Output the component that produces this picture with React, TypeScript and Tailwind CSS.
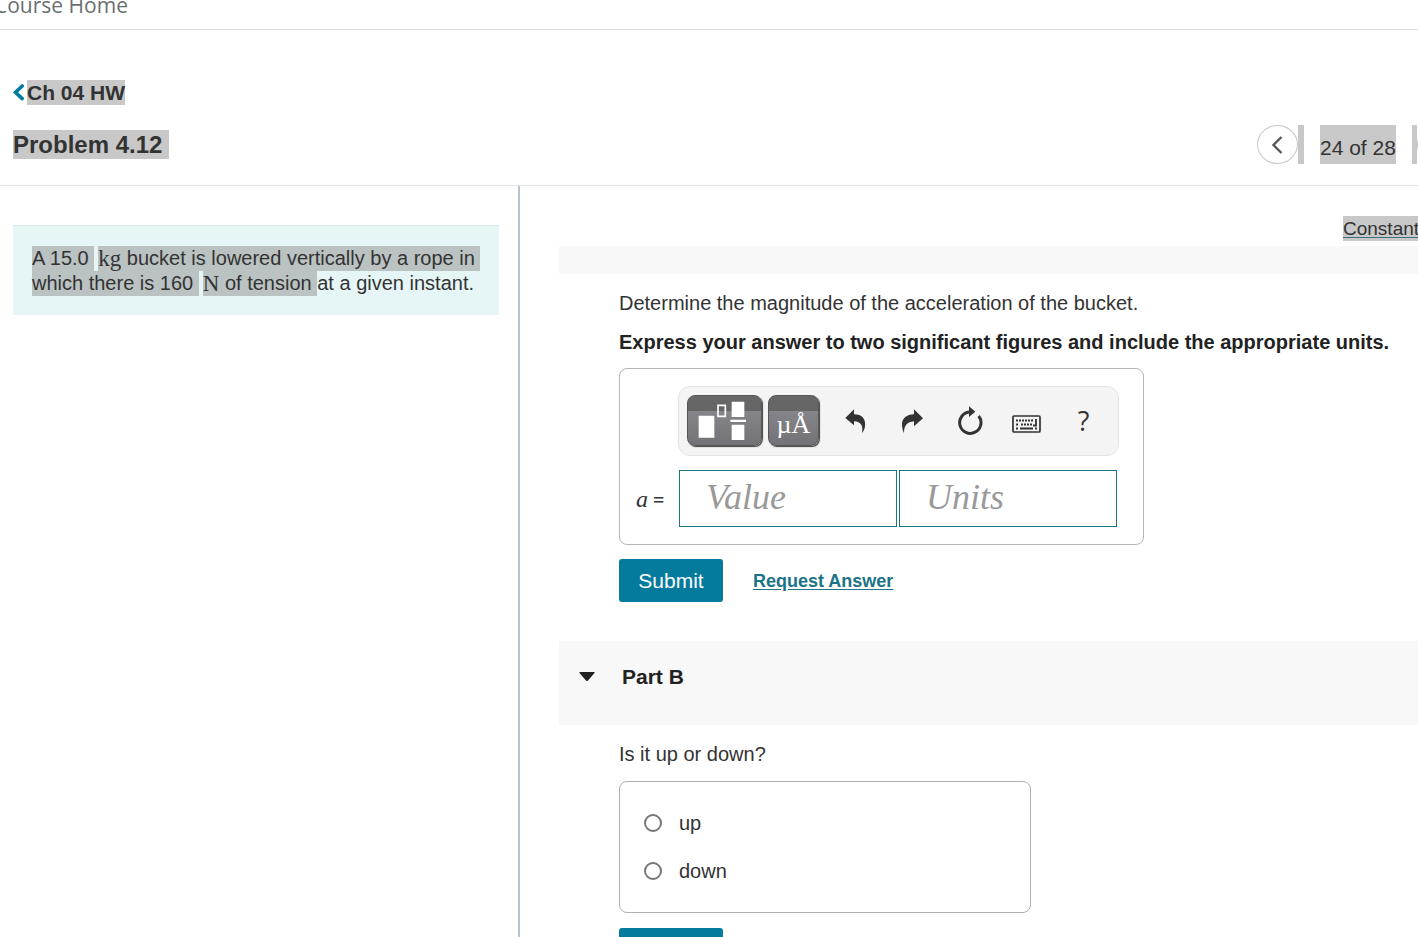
import type { ReactNode } from "react";

function Mark({ children }: { children: ReactNode }) {
  return <span className="inline-block h-[25px] whitespace-pre bg-[#bac2c2] align-top">{children}</span>;
}

function Unit({ children }: { children: ReactNode }) {
  return (
    <span className="ml-1 inline-block h-[25px] bg-[#bac2c2] align-top font-['Liberation_Serif',serif] text-[23px]">
      {children}
    </span>
  );
}

function TopBar() {
  return (
    <div className="h-[30px] overflow-hidden border-b border-[#dcdcdc]">
      <a
        href="#"
        className="-ml-[6px] -mt-[9px] block font-['Open_Sans',sans-serif] text-[21px] leading-7 text-[#6a7070]"
      >
        Course Home
      </a>
    </div>
  );
}

function ProblemHeader() {
  return (
    <header className="overflow-hidden border-b border-[#e1e1e1] pb-[21px] pl-[13px] pt-[50px] text-[21px] text-[#333]">
      <a href="#" className="flex w-fit items-center font-bold leading-[25px]">
        <svg width="14" height="20" viewBox="0 0 14 20" fill="none" stroke="#047a9c" strokeWidth="3.6" aria-hidden="true">
          <path d="M9.200 3 2.500 9.300l6.700 6.300" strokeLinecap="round" />
        </svg>
        <span className="bg-[#c8c8c8]">Ch 04 HW</span>
      </a>
      <div className="mt-5 flex items-center justify-between">
        <h1 className="whitespace-pre bg-[#c8c8c8] text-2xl font-bold leading-[29px]">{"Problem 4.12 "}</h1>
        <nav className="flex w-[161px] shrink-0" aria-label="Problems">
          <button
            type="button"
            aria-label="Previous problem"
            className="grid h-[39px] w-[41px] shrink-0 place-items-center rounded-[50%] border border-[#c7c7c7]"
          >
            <svg width="12" height="20" viewBox="0 0 12 20" fill="none" stroke="#555" strokeWidth="2.3" aria-hidden="true">
              <path d="M9.500 2 1.500 10l8 8" />
            </svg>
          </button>
          <span className="w-[6px] shrink-0 bg-[#c8c8c8]" />
          <span className="mx-4 shrink-0 whitespace-nowrap bg-[#c8c8c8] pt-[7px] leading-8">24 of 28</span>
          <span className="w-[5px] shrink-0 bg-[#c8c8c8]" />
          <button
            type="button"
            aria-label="Next problem"
            className="h-[39px] w-[41px] shrink-0 rounded-[50%] border border-[#c7c7c7]"
          />
        </nav>
      </div>
    </header>
  );
}

function Toolbar() {
  const dark =
    "grid h-[51px] place-items-center rounded-lg border border-[#555] bg-linear-to-b from-[#666] from-30% via-[#85858a] via-30% to-[#737377] shadow-[1px_1px_1px_#444]";
  const plain = "grid h-[51px] w-[57px] shrink-0 place-items-center text-[#333]";
  return (
    <div className="flex w-[441px] items-center rounded-xl border border-[#e4e4e4] bg-[#f4f4f4] pb-[9px] pl-2 pt-2">
      <button type="button" aria-label="Templates" className={`${dark} w-[75px] pr-[5px]`}>
        <svg width="48" height="40" viewBox="0 0 144 120" fill="#fff" aria-hidden="true">
          <path d="M2 44h47v66H2zM101 2h38v46h-38zM101 71h38v46h-38zM97 56h47v7H97z" />
          <path d="M60 13h22v33H60z" fill="none" stroke="#fff" strokeWidth="5" />
        </svg>
      </button>
      <button
        type="button"
        aria-label="Symbols"
        className={`${dark} ml-[6px] mr-2 w-[51px] pt-2 font-['Liberation_Serif',serif] text-[26px] leading-8 text-white`}
      >
        µÅ
      </button>
      <button type="button" aria-label="Undo" className={plain}>
        <svg width="21" height="26" viewBox="525 82 63 78" fill="currentColor" aria-hidden="true">
          <path d="M526 112 552 86v15c24 0 36 14 33 36-1 9-4 15-9 20 4-22-3-34-24-35v12z" />
        </svg>
      </button>
      <button type="button" aria-label="Redo" className={plain}>
        <svg width="21" height="26" viewBox="38 82 63 78" fill="currentColor" aria-hidden="true">
          <path d="M101 113 74 86v15c-28 1-40 18-35 40 1 7 3 12 5 16 0-22 9-33 30-35v15z" />
        </svg>
      </button>
      <button type="button" aria-label="Reset" className={plain}>
        <svg width="26" height="29" viewBox="203 80 78 87" fill="none" stroke="currentColor" aria-hidden="true">
          <path d="M242 98a32 32 0 1 0 26 12" strokeWidth="9" />
          <path d="m239 81 19 16-19 16z" fill="currentColor" stroke="none" />
        </svg>
      </button>
      <button type="button" aria-label="Keyboard shortcuts" className={`${plain} pt-2`}>
        <svg width="29" height="19" viewBox="0 0 29 19" fill="none" stroke="currentColor" aria-hidden="true">
          <rect x="1" y="1" width="27" height="16" rx="1" strokeWidth="1.700" />
          <path d="M4 5.500h17M4 9.500h3M9 9.500h12M4 13.500h2M23 13.500h2" strokeWidth="1.800" strokeDasharray="2 1" />
          <path d="M8 13.500h13M24 4v6.500h-3" strokeWidth="1.800" />
        </svg>
      </button>
      <button type="button" aria-label="Help" className={`${plain} font-['Open_Sans',sans-serif] text-[27px] font-medium leading-8`}>
        ?
      </button>
    </div>
  );
}

function AnswerField({ name }: { name: string }) {
  return (
    <input
      type="text"
      aria-label={name}
      placeholder={name}
      className="h-[57px] w-[218px] border border-[#1b7386] bg-white px-[26px] pb-1 font-['Liberation_Serif',serif] text-4xl italic text-[#333] placeholder:text-[#999]"
    />
  );
}

function PartA() {
  return (
    <section className="pl-[60px] pt-[17px]">
      <p className="leading-[25px]">Determine the magnitude of the acceleration of the bucket.</p>
      <p className="mt-[14px] whitespace-nowrap font-bold leading-[25px] text-[#222]">
        Express your answer to two significant figures and include the appropriate units.
      </p>
      <div className="mt-[13px] w-[525px] rounded-lg border border-[#b5b5b5] pb-[17px] pl-4 pt-[17px]">
        <div className="pl-[42px]">
          <Toolbar />
        </div>
        <div className="mt-[14px] flex items-center">
          <span className="w-[43px] whitespace-nowrap font-['Liberation_Serif',serif] text-[20px]">
            <i className="text-2xl">a</i> <b>=</b>
          </span>
          <div className="flex gap-[2px]">
            <AnswerField name="Value" />
            <AnswerField name="Units" />
          </div>
        </div>
      </div>
      <div className="mt-[14px] flex items-center gap-[30px]">
        <SubmitButton />
        <a href="#" className="text-lg font-bold text-[#1b7386] underline underline-offset-2">
          Request Answer
        </a>
      </div>
    </section>
  );
}

function SubmitButton() {
  return (
    <button type="button" className="h-[43px] w-[104px] rounded-[3px] bg-[#047a9c] text-[21px] text-white">
      Submit
    </button>
  );
}

function PartB() {
  return (
    <section className="mt-[39px]">
      <h2 className="h-[84px] bg-[#f8f8f8] pl-5 pt-[23px] text-[21px] font-bold leading-[25px] text-[#222]">
        <button type="button" className="flex items-center gap-[27px]">
          <svg width="16" height="10" viewBox="0 0 16 10" fill="#222" aria-hidden="true">
            <path d="M1 0h14q1 0 .5 1L9 8.500q-1 1-2 0L.5 1Q0 0 1 0Z" />
          </svg>
          Part B
        </button>
      </h2>
      <div className="pl-[60px] pt-[17px]">
        <p className="leading-[25px]">Is it up or down?</p>
        <fieldset className="mt-[14px] flex h-[132px] w-[412px] flex-col justify-center rounded-lg border border-[#b0b0b0] pl-6">
          {["up", "down"].map((choice) => (
            <label key={choice} className="flex h-12 items-center gap-[17px]">
              <input
                type="radio"
                name="direction"
                value={choice}
                className="h-[18px] w-[18px] appearance-none rounded-full border-2 border-[#777] bg-white checked:bg-[#047a9c]"
              />
              {choice}
            </label>
          ))}
        </fieldset>
        <div className="mt-[15px]">
          <SubmitButton />
        </div>
      </div>
    </section>
  );
}

export default function App() {
  return (
    <div className="flex h-screen flex-col overflow-hidden bg-white font-['Liberation_Sans',Arial,sans-serif] text-[20px] text-[#333]">
      <TopBar />
      <ProblemHeader />
      <main className="flex min-h-0 flex-1">
        <aside className="w-[520px] shrink-0 border-r-2 border-[#b9c3cc] pl-[13px] pr-[19px] pt-[39px]">
          <div className="border-t border-[#d5e5e6] bg-[#e6f6f7] pb-[19px] pl-[19px] pt-5 leading-[25px]">
            <p className="whitespace-nowrap">
              <Mark>{"A 15.0 "}</Mark>
              <Unit>kg</Unit>
              <Mark>{" bucket is lowered vertically by a rope in "}</Mark>
              <br />
              <Mark>{"which there is 160 "}</Mark>
              <Unit>N</Unit>
              <Mark>{" of tension "}</Mark>at a given instant.
            </p>
          </div>
        </aside>
        <div className="min-w-0 flex-1 overflow-hidden pl-[39px] pt-[30px]">
          <div className="ml-auto flex w-[75px]">
            <a href="#" className="bg-[#c8c8c8] text-[19px] leading-[25px] underline decoration-[#3f6f7a] underline-offset-2">
              Constants
            </a>
          </div>
          <div className="mt-[5px] h-7 bg-[#f8f8f8]" />
          <PartA />
          <PartB />
        </div>
      </main>
    </div>
  );
}
